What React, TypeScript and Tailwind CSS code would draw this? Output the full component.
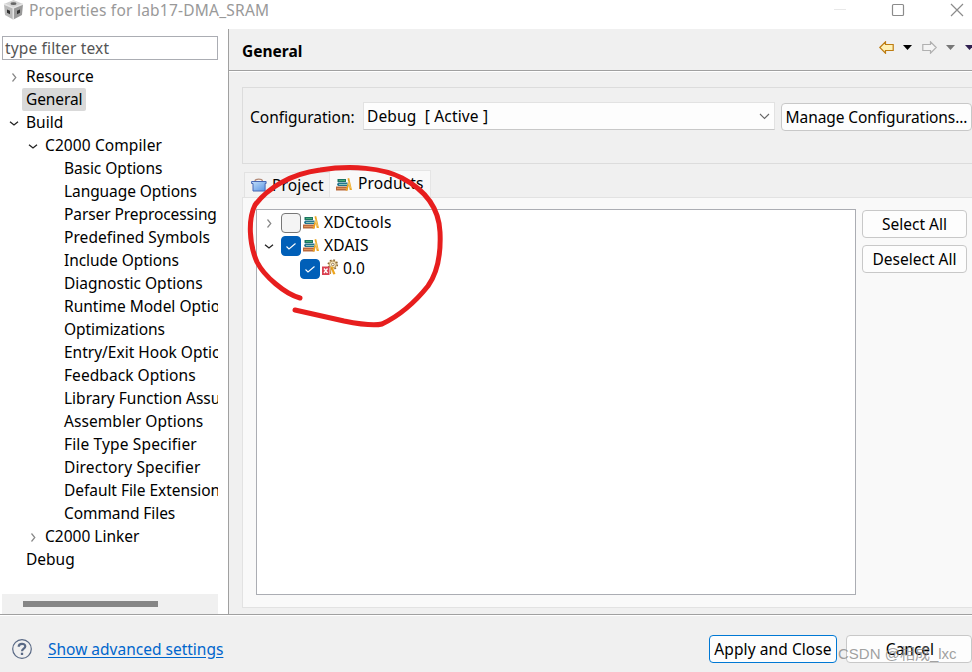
import React from 'react';
import clsx from 'clsx';

interface TreeItem {
  label: string;
  level: 1 | 2 | 3;
  state?: 'open' | 'closed';
  selected?: boolean;
  tracking?: string;
}

const treeItems: TreeItem[] = [
  { label: 'Resource', level: 1, state: 'closed', tracking: 'tracking-[0.1px]' },
  { label: 'General', level: 1, selected: true, tracking: 'tracking-[-0.1px]' },
  { label: 'Build', level: 1, state: 'open' },
  { label: 'C2000 Compiler', level: 2, state: 'open', tracking: 'tracking-[0.1px]' },
  { label: 'Basic Options', level: 3, tracking: 'tracking-[-0.08px]' },
  { label: 'Language Options', level: 3, tracking: 'tracking-[-0.08px]' },
  { label: 'Parser Preprocessing Options', level: 3, tracking: 'tracking-[-0.08px]' },
  { label: 'Predefined Symbols', level: 3, tracking: 'tracking-[0.06px]' },
  { label: 'Include Options', level: 3, tracking: 'tracking-[-0.06px]' },
  { label: 'Diagnostic Options', level: 3 },
  { label: 'Runtime Model Options', level: 3 },
  { label: 'Optimizations', level: 3, tracking: 'tracking-[-0.06px]' },
  { label: 'Entry/Exit Hook Options', level: 3 },
  { label: 'Feedback Options', level: 3, tracking: 'tracking-[0.06px]' },
  { label: 'Library Function Assumptions', level: 3 },
  { label: 'Assembler Options', level: 3, tracking: 'tracking-[0.06px]' },
  { label: 'File Type Specifier', level: 3, tracking: 'tracking-[0.15px]' },
  { label: 'Directory Specifier', level: 3, tracking: 'tracking-[0.15px]' },
  { label: 'Default File Extensions', level: 3, tracking: 'tracking-[-0.05px]' },
  { label: 'Command Files', level: 3, tracking: 'tracking-[-0.08px]' },
  { label: 'C2000 Linker', level: 2, state: 'closed' },
  { label: 'Debug', level: 1 },
];

const Chevron = ({ open }: { open: boolean }) => (
  <svg width="12" height="12" viewBox="0 0 12 12" fill="none" className="shrink-0">
    {open ? (
      <path d="M2 4.700 6 8l4-3.300" stroke="#222" strokeWidth="1.300" />
    ) : (
      <path d="m4.500 2.500 3.300 4-3.300 4" stroke="#888" strokeWidth="1.200" />
    )}
  </svg>
);

const CubeIcon = () => (
  <svg width="21" height="20" viewBox="0 0 21 20" className="shrink-0">
    <path d="m10.500 0 9 3.800-9 4.200-9-4.200Z" fill="#d2d2d2" />
    <path d="m1 4 9 4v11.500L2 15Z" fill="#b8b8b8" />
    <path d="m20 4-9.500 4v11.500L19 15Z" fill="#999" />
    <path d="M1 4 10.300 8 20 4M10.300 8v11" fill="none" stroke="#e4e4e4" strokeWidth="1.500" />
    <ellipse cx="10.500" cy="3.700" rx="3" ry="1.400" fill="#666" />
    <path d="m4 9.500 3 1.200v3.500l-3-1.500Z" fill="#333" />
    <path d="m17 9.500-3 1.200v3.500l3-1.500Z" fill="#333" />
  </svg>
);

const BooksIcon = () => (
  <svg width="16" height="13" viewBox="0 0 16 13" className="shrink-0">
    <path d="M1.500 1H10v3H1.500Z" fill="#1c7462" />
    <path d="M3 2.500h6" stroke="#48ad77" />
    <path d="M2 4.500h9.500V8H2L1 6.500Z" fill="#24748f" />
    <path d="M3 6.500h8" stroke="#8ec6b8" />
    <path d="M0 8.500h11.500v4H0Z" fill="#b8683c" />
    <path d="M1 10.500h10" stroke="#e0955c" />
    <path d="m11.500.5 1.700-.5L16 12h-2.300Z" fill="#eca928" />
    <path d="m12.500 3 2 7" stroke="#f8d77d" strokeWidth=".7" />
    <path d="m12 4.500.8 3-1.300 5H9.500Z" fill="#eca01c" />
  </svg>
);

const FolderIcon = () => (
  <svg width="16" height="14" viewBox="0 0 16 14" className="shrink-0">
    <defs>
      <linearGradient id="folder" x1="0" y1="0" x2="1" y2="1">
        <stop stopColor="#c3e0fa" />
        <stop offset="1" stopColor="#5792e3" />
      </linearGradient>
    </defs>
    <path d="M4 3C4 .5 11 .5 11.500 3" fill="none" stroke="#b28976" strokeWidth="1.200" />
    <path d="M.6 3.500h14.500v2h-1v7.500H2V5.500H.6Z" fill="url(#folder)" stroke="#4767b4" />
  </svg>
);

const BrokenProductIcon = () => (
  <svg width="17" height="17" viewBox="0 0 17 17" className="shrink-0">
    <circle cx="10.800" cy="5.500" r="4.500" fill="#f4dfaa" stroke="#8a6738" strokeWidth="1.600" strokeDasharray="1.700 1.830" />
    <circle cx="10.800" cy="5.500" r="3.400" fill="#f9ebc6" stroke="#a88750" strokeWidth=".8" />
    <circle cx="10.800" cy="5.500" r="1.300" fill="#fff" stroke="#8a6738" strokeWidth=".8" />
    <path d="m8.500 8 1.800-.7 3.200 7.700-2.300.5Z" fill="#eda51c" />
    <path d="m9 9-.5 6" stroke="#c98422" />
    <path d="M0 7.500h7.500v8.500H0Z" fill="#d94050" />
    <path d="m2 9.500 3.500 4.500M5.500 9.500 2 14" stroke="#fff" strokeWidth="1.300" />
  </svg>
);

const CheckBox = ({ checked }: { checked: boolean }) => (
  <div
    className={clsx(
      'flex h-5 w-5 shrink-0 items-center justify-center rounded-[4px] border',
      checked ? 'border-[#005fb8] bg-[#005fb8]' : 'border-[#777] bg-[#f4f4f4]',
    )}
  >
    {checked && (
      <svg width="12" height="10" viewBox="0 0 12 10" fill="none">
        <path d="m1.500 5.500 2.500 2.500 6.500-5.500" stroke="#fff" strokeWidth="1.100" />
      </svg>
    )}
  </div>
);

const Arrow = ({ forward }: { forward?: boolean }) => (
  <svg width="15" height="13" viewBox="0 0 15 13" className={clsx('shrink-0', forward && '-scale-x-100')}>
    <path
      d="M.8 6.500 6.500.8v2.700h7.700v6H6.500v2.700Z"
      fill={forward ? '#f4f4f4' : '#fff1b5'}
      stroke={forward ? '#b0b0b0' : '#bd7c12'}
      strokeWidth="1.200"
    />
  </svg>
);

const Button = ({ children, className }: { children: React.ReactNode; className?: string }) => (
  <button
    className={clsx(
      'flex h-7 shrink-0 items-center justify-center rounded-[4px] border bg-[#fdfdfd] whitespace-nowrap',
      className,
    )}
  >
    {children}
  </button>
);

function Sidebar() {
  return (
    <aside className="flex w-[228px] shrink-0 flex-col bg-white pt-[7px] pl-[2px]">
      <div className="flex h-6 w-[216px] items-center border border-[#abadb3] pl-[2px] tracking-[0.15px] text-[#555]">
        type filter text
      </div>
      <div className="mt-[5px] h-[529px] w-[216px] overflow-hidden">
        {treeItems.map((item) => (
          <div
            key={item.label}
            className={clsx(
              'flex h-[23px] items-center whitespace-nowrap',
              item.level === 1 && 'pl-[6px]',
              item.level === 2 && 'pl-[25px]',
              item.level === 3 && 'pl-[44px]',
            )}
          >
            <div className="w-[14px] shrink-0">{item.state && <Chevron open={item.state === 'open'} />}</div>
            <span
              className={clsx(
                'flex h-[23px] items-center rounded-[2px] px-1 pb-[2px]',
                item.tracking,
                item.selected && 'w-[64px] bg-[#d9d9d9]',
              )}
            >
              {item.label}
            </span>
          </div>
        ))}
      </div>
      <div className="flex h-5 w-[216px] items-center bg-[#f0f0f0] pl-[21px]">
        <div className="h-[6px] w-[135px] bg-[#868686]" />
      </div>
    </aside>
  );
}

function ProductTree() {
  return (
    <div className="h-[386px] w-[600px] shrink-0 border border-[#abadb3] bg-white pt-px pl-[6px]">
      <div className="flex h-[23px] items-center">
        <Chevron open={false} />
        <div className="ml-[6px] flex items-center gap-[2px]">
          <CheckBox checked={false} />
          <BooksIcon />
        </div>
        <span className="ml-[5px] pb-px tracking-[0.2px]">XDCtools</span>
      </div>
      <div className="flex h-[23px] items-center">
        <Chevron open />
        <div className="ml-[6px] flex items-center gap-[2px]">
          <CheckBox checked />
          <BooksIcon />
        </div>
        <span className="ml-[5px] pb-px tracking-[0.2px]">XDAIS</span>
      </div>
      <div className="flex h-[23px] items-center pl-[37px]">
        <CheckBox checked />
        <div className="ml-[2px] pb-[2px]">
          <BrokenProductIcon />
        </div>
        <span className="ml-1 pb-px">0.0</span>
      </div>
    </div>
  );
}

export default function App() {
  return (
    <div className="relative flex h-[672px] w-[972px] flex-col overflow-hidden bg-[#f0f0f0] font-['Noto_Sans','Noto_Sans_CJK_SC',sans-serif] text-[15.5px] leading-[22px] text-black">
      {/* Title bar */}
      <header className="flex h-[29px] shrink-0 items-start bg-white pl-[3px] text-[#999]">
        <CubeIcon />
        <span className="-mt-px ml-[5px] flex-1 tracking-[0.23px]">Properties for lab17-DMA_SRAM</span>
        <svg width="138" height="20" viewBox="0 0 138 20" fill="none" stroke="#8b8b8b">
          <path d="M0 9.500h12" stroke="#e8e8e8" />
          <rect x="58.500" y="4.500" width="11" height="11" rx="1" strokeWidth="1.200" />
          <path d="m117 4 12 12M129 4l-12 12" strokeWidth="1.200" />
        </svg>
      </header>

      <div className="flex h-[585px] shrink-0">
        <Sidebar />
        <main className="flex w-[744px] shrink-0 flex-col overflow-hidden border-l border-[#a0a0a0]">
          <div className="flex h-[42px] shrink-0 items-center border-b border-[#a0a0a0] pl-[13px]">
            <h1 className="flex-1 pt-[3px] font-bold">General</h1>
            <div className="flex items-center pb-1">
              <Arrow />
              <svg width="9" height="5" viewBox="0 0 9 5" className="ml-[9px]"><path d="M0 0h9L4.500 5Z" /></svg>
              <div className="ml-[10px] flex"><Arrow forward /></div>
              <svg width="9" height="5" viewBox="0 0 9 5" className="ml-[9px]"><path d="M0 0h9L4.500 5Z" fill="#777" /></svg>
              <svg width="7" height="5" viewBox="0 0 7 5" className="ml-[10px]"><path d="M0 0h9L4.500 5Z" fill="#302050" /></svg>
            </div>
          </div>

          <div className="flex h-[543px] flex-col border-t border-white pl-[13px]">
            {/* Configuration selector */}
            <section className="mt-[15px] flex h-[77px] shrink-0 items-start border-y border-l border-[#dcdcdc] pl-[7px]">
              <span className="mt-[18px] w-[113px]">Configuration:</span>
              <div className="mt-[14px] flex h-7 w-[412px] items-center justify-between border border-[#e2e2e2] border-b-[#c8c8c8] bg-[#fdfdfd] pr-1 pl-[3px]">
                <span className="tracking-[0.15px] whitespace-pre">Debug  [ Active ]</span>
                <svg width="11" height="7" viewBox="0 0 11 7" fill="none"><path d="m1 1 4.500 4.500L10 1" stroke="#666" strokeWidth="1.100" /></svg>
              </div>
              <Button className="mt-[15px] ml-[6px] w-[191px] border-[#c8c8c8] tracking-[-0.08px]">Manage Configurations...</Button>
            </section>

            {/* Tabs */}
            <div className="flex h-[33px] shrink-0 items-end pl-[2px]">
              <div className="flex h-[25px] w-[85px] items-center border-t border-l border-[#e2e2e2] bg-[#f3f3f3] pl-[6px]">
                <FolderIcon />
                <span className="ml-[5px] tracking-[0.15px]">Project</span>
              </div>
              <div className="flex h-[27px] w-[102px] items-center border border-b-0 border-[#e5e5e5] bg-[#f9f9f9] pl-[6px]">
                <BooksIcon />
                <span className="ml-[6px] pb-[2px] tracking-[0.15px]">Products</span>
              </div>
            </div>
            <section className="flex h-[411px] shrink-0 items-start gap-[6px] border-y border-l border-[#e2e2e2] bg-[#f9f9f9] pt-[11px] pl-[13px]">
              <ProductTree />
              <div className="flex flex-col gap-[7px] pt-px">
                <Button className="w-[105px] border-[#c8c8c8]">Select All</Button>
                <Button className="w-[105px] border-[#c8c8c8]">Deselect All</Button>
              </div>
            </section>
          </div>
        </main>
      </div>

      {/* Dialog buttons */}
      <footer className="flex h-[58px] shrink-0 items-center border-t border-[#a0a0a0] pt-[10px] pl-3 shadow-[inset_0_1px_0_#fff]">
        <svg width="20" height="20" viewBox="0 0 20 20" fill="none" stroke="#596985">
          <circle cx="10" cy="10" r="9.300" strokeWidth="1.200" />
          <path d="M6.700 7.700C6.700 3.800 13.300 4 13.300 7.300c0 2.400-3.300 2.300-3.300 5" strokeWidth="2.200" />
          <path d="M10 13.700v2.300" strokeWidth="2.300" />
        </svg>
        <a className="ml-4 flex-1 text-[#0066cc] underline underline-offset-2">Show advanced settings</a>
        <Button className="w-32 border-[#0078d4] pt-px tracking-[0.08px]">Apply and Close</Button>
        <Button className="ml-[9px] w-[126px] border-[#c8c8c8] pt-px pl-[2px]">Cancel</Button>
      </footer>

      {/* Watermark */}
      <div className="absolute top-[643px] left-[838px] font-['Liberation_Sans','Noto_Sans_CJK_SC',sans-serif] text-[15px] whitespace-nowrap text-[#888]/80">
        CSDN @相成_lxc
      </div>

      {/* Red marker stroke round the product list */}
      <svg className="pointer-events-none absolute top-[160px] left-[240px]" width="220" height="180" viewBox="0 0 220 180" fill="none" stroke="#e71e1e" strokeWidth="5" strokeLinecap="round" strokeLinejoin="round">
        <path d="M60 138C45 134 24 116 17 102C9 84 8 59 15 45C28 28 50 14 80 10C112 5 143 8 162 18C187 31 199 50 200 72C201 93 198 112 188 126C176 141 161 155 142 164C134 166 119 164 104 161L55 150" />
      </svg>
    </div>
  );
}
